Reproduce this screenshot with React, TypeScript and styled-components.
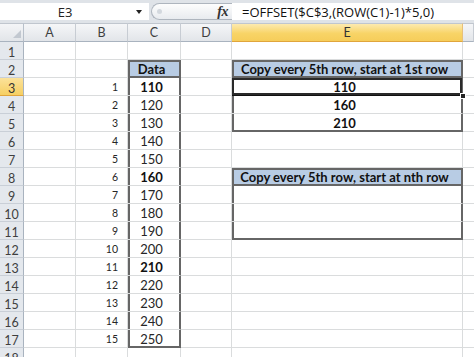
import React from 'react';
import styled, { createGlobalStyle, css } from 'styled-components';

const GlobalStyle = createGlobalStyle`
  html, body { margin: 0; padding: 0; background: #fff; }
  body { overflow: hidden; }
  * { box-sizing: border-box; }
`;

const DARK = '#666';
const GRID = '#dadcdd';

const Window = styled.div`
  width: 474px;
  height: 357px;
  overflow: hidden;
  background: #fff;
  display: flex;
  flex-direction: column;
`;

const FormulaBar = styled.div`
  height: 23px;
  flex-shrink: 0;
  padding: 3px 0 3px 0;
  background: #dfe3e8;
  display: flex;
`;

const NameBox = styled.div`
  width: 149px;
  background: #fff;
  display: flex;
  align-items: center;
  font-family: 'Open Sans', sans-serif;
  font-size: 13px;
  color: #222;
`;

const NameText = styled.span`
  width: 130px;
  text-align: center;
`;

const DropArrow = styled.span`
  width: 0;
  height: 0;
  margin-left: 6px;
  border-left: 3.5px solid transparent;
  border-right: 3.5px solid transparent;
  border-top: 4px solid #222;
`;

const FxGroup = styled.div`
  margin-left: 2px;
  width: 81px;
  border: 1px solid #aeb5be;
  border-right: none;
  border-radius: 9px 0 0 9px;
  background: linear-gradient(#fdfdfd, #e8ebef);
  display: flex;
  align-items: center;
  padding: 0 4px 0 5px;
`;

const Grip = styled.span`
  width: 5px;
  height: 5px;
  border-radius: 50%;
  background: #d3d8de;
`;

const FxLabel = styled.span`
  margin-left: auto;
  font-family: 'Liberation Serif', serif;
  font-style: italic;
  font-weight: bold;
  font-size: 14px;
  color: #333;
  letter-spacing: -0.5px;
`;

const FormulaInput = styled.div`
  flex: 1;
  background: #fff;
  display: flex;
  align-items: center;
  padding-left: 10px;
  font-family: 'Open Sans', sans-serif;
  font-size: 13px;
  color: #111;
  white-space: nowrap;
`;

const Sheet = styled.div`
  display: grid;
  grid-template-columns: 24px 52px 52px 53px 51px 231px 11px;
  grid-template-rows: 19px repeat(18, 18px);
  font-family: Lato, 'Open Sans', sans-serif;
`;

const Corner = styled.div`
  position: relative;
  background: linear-gradient(#f4f5f7, #e2e5e9);
  border-top: 1px solid #c0c6ce;
  border-right: 1px solid #b8c0ca;
  border-bottom: 1px solid #a9b3bf;
  &::after {
    content: '';
    position: absolute;
    right: 2px;
    bottom: 3px;
    width: 0;
    height: 0;
    border-left: 8px solid transparent;
    border-bottom: 8px solid #c2c8d0;
  }
`;

const ColHead = styled.div<{ $sel?: boolean }>`
  display: flex;
  align-items: center;
  justify-content: center;
  font-size: 12.5px;
  color: #3f3f3f;
  border-top: 1px solid #c0c6ce;
  border-right: 1px solid #c7ccd3;
  border-bottom: 1px solid #a9b3bf;
  background: linear-gradient(#f5f6f8, #e2e5e9);
  ${(p) =>
    p.$sel &&
    css`
      background: linear-gradient(#fdeab0, #f8d467 55%, #f6cd5a);
      border-bottom-color: #e0a53c;
      border-right-color: #e7c07a;
      color: #333;
    `}
`;

const RowHead = styled.div<{ $sel?: boolean }>`
  display: flex;
  align-items: center;
  justify-content: center;
  padding-top: 3px;
  font-size: 12.5px;
  color: #3f3f3f;
  background: #e4e8ed;
  border-right: 1px solid #a9b3bf;
  border-bottom: 1px solid #c9cfd7;
  ${(p) =>
    p.$sel &&
    css`
      background: linear-gradient(#fbe29a, #f6cf62);
      border-bottom-color: #e0a53c;
      color: #333;
    `}
`;

type Sides = { t?: boolean; r?: boolean; b?: boolean; l?: boolean };

const Cell = styled.div<{
  $align?: 'left' | 'center' | 'right';
  $small?: boolean;
  $bold?: boolean;
  $fill?: string;
  $box?: Sides;
  $active?: boolean;
}>`
  position: relative;
  display: flex;
  align-items: center;
  white-space: nowrap;
  overflow: visible;
  padding: 1px 9px 0 4px;
  justify-content: ${(p) =>
    p.$align === 'center' ? 'center' : p.$align === 'right' ? 'flex-end' : 'flex-start'};
  font-size: ${(p) => (p.$small ? '10.5px' : '13px')};
  font-weight: ${(p) => (p.$bold ? 700 : 400)};
  color: ${(p) => (p.$bold ? '#111' : '#262626')};
  background: ${(p) => p.$fill || '#fff'};
  border-right: 1px solid ${(p) => (p.$box?.r || p.$active ? DARK : GRID)};
  border-bottom: 1px solid ${(p) => (p.$box?.b ? DARK : p.$active ? '#111' : GRID)};
  box-shadow: ${(p) => {
    if (p.$active) return 'inset 0 0 0 2px #2a2a2a';
    const s: string[] = [];
    const b = p.$box || {};
    if (b.l) s.push(`inset 2px 0 0 ${DARK}`);
    if (b.t) s.push(`inset 0 2px 0 ${DARK}`);
    if (b.r) s.push(`inset -1px 0 0 ${DARK}`);
    if (b.b) s.push(`inset 0 -1px 0 ${DARK}`);
    return s.length ? s.join(', ') : 'none';
  }};
`;

const FillHandle = styled.span`
  position: absolute;
  right: -4px;
  bottom: -4px;
  width: 6px;
  height: 6px;
  background: #222;
  border: 1px solid #fff;
  z-index: 2;
`;

const HEADER_FILL = '#b8cce4';
const COLS = ['A', 'B', 'C', 'D', 'E', 'F'];

type CellDef = {
  text?: string;
  align?: 'left' | 'center' | 'right';
  small?: boolean;
  bold?: boolean;
  fill?: string;
  box?: Sides;
  active?: boolean;
};

const boldC = new Set([110, 160, 210]);

function cellAt(row: number, col: string): CellDef {
  if (col === 'B' && row >= 3 && row <= 17) {
    return { text: String(row - 2), align: 'right', small: true };
  }
  if (col === 'C') {
    if (row === 2)
      return { text: 'Data', align: 'center', bold: true, fill: HEADER_FILL, box: { t: true, l: true, r: true, b: true } };
    if (row >= 3 && row <= 17) {
      const v = 110 + (row - 3) * 10;
      return { text: String(v), align: 'center', bold: boldC.has(v), box: { l: true, r: true, b: row === 17 } };
    }
  }
  if (col === 'E') {
    if (row === 2)
      return {
        text: 'Copy every 5th row, start at 1st row',
        align: 'center',
        bold: true,
        fill: HEADER_FILL,
        box: { t: true, l: true, r: true, b: true },
      };
    if (row === 3) return { text: '110', align: 'center', bold: true, active: true };
    if (row === 4) return { text: '160', align: 'center', bold: true, box: { l: true, r: true } };
    if (row === 5) return { text: '210', align: 'center', bold: true, box: { l: true, r: true, b: true } };
    if (row === 8)
      return {
        text: 'Copy every 5th row, start at nth row',
        align: 'center',
        bold: true,
        fill: HEADER_FILL,
        box: { t: true, l: true, r: true, b: true },
      };
    if (row >= 9 && row <= 11) return { box: { l: true, r: true, b: row === 11 } };
  }
  return {};
}

export default function App() {
  const rows = Array.from({ length: 18 }, (_, i) => i + 1);
  return (
    <Window>
      <GlobalStyle />
      <FormulaBar>
        <NameBox>
          <NameText>E3</NameText>
          <DropArrow />
        </NameBox>
        <FxGroup>
          <Grip />
          <FxLabel>fx</FxLabel>
        </FxGroup>
        <FormulaInput>=OFFSET($C$3,(ROW(C1)-1)*5,0)</FormulaInput>
      </FormulaBar>
      <Sheet>
        <Corner />
        {COLS.map((c) => (
          <ColHead key={c} $sel={c === 'E'}>
            {c === 'F' ? '' : c}
          </ColHead>
        ))}
        {rows.map((r) => (
          <React.Fragment key={r}>
            <RowHead $sel={r === 3}>{r}</RowHead>
            {COLS.map((c) => {
              const d = cellAt(r, c);
              return (
                <Cell
                  key={c}
                  $align={d.align}
                  $small={d.small}
                  $bold={d.bold}
                  $fill={d.fill}
                  $box={d.box}
                  $active={d.active}
                >
                  {d.text}
                  {d.active && <FillHandle />}
                </Cell>
              );
            })}
          </React.Fragment>
        ))}
      </Sheet>
    </Window>
  );
}
